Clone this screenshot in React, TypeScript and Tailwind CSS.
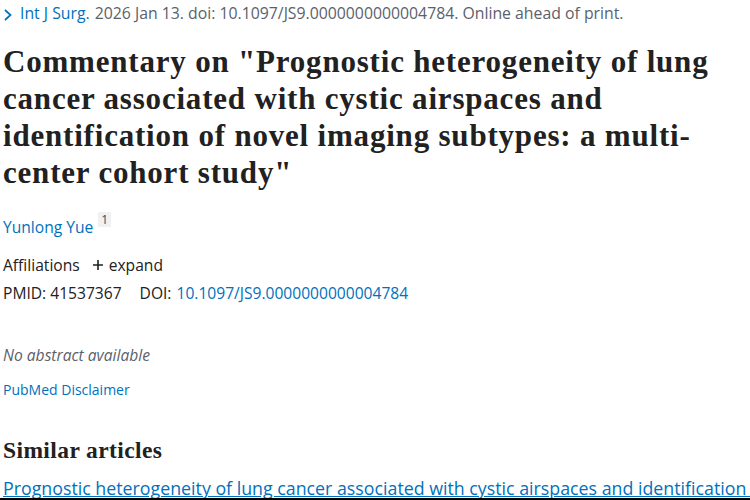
export default function App() {
  const sans = "font-['Open_Sans','Noto_Sans',sans-serif]";

  return (
    <main className={`h-[500px] overflow-hidden bg-white text-[#212121] ${sans} border-b-2 border-black`}>
      <div className="pl-[3px] pr-2">
        <div className="flex items-center h-[26px] mt-[1px] text-[15.8px] text-[#5b616b] whitespace-nowrap">
          <svg width="10" height="14" viewBox="0 0 10 14" className="mr-[7px] mt-[1px]">
            <path d="M2 2 L7.5 7 L2 12" fill="none" stroke="#0071bc" strokeWidth="1.7" />
          </svg>
          <span className="text-[#0071bc]">Int J Surg.</span>
          <span className="ml-[5px]">2026 Jan 13. doi: 10.1097/JS9.0000000000004784. Online ahead of print.</span>
        </div>

        <h1 className="mt-[16px] w-[735px] font-['Liberation_Serif',serif] font-bold text-[31px] leading-[37px] tracking-[0.8px]">
          Commentary on "Prognostic heterogeneity of lung cancer associated with cystic airspaces and identification of novel imaging subtypes: a multi-center cohort study"
        </h1>

        <div className="mt-[25px] flex items-start text-[15.6px] leading-[22px]">
          <span className="text-[#0071bc]">Yunlong Yue</span>
          <span className="ml-[5px] -mt-[4px] px-[3px] bg-[#f1f1f1] text-[12px] leading-[15px] text-[#2d4f6c]">1</span>
        </div>

        <div className="mt-[16px] flex items-center text-[15.6px] leading-[22px]">
          <span>Affiliations</span>
          <span className="ml-[12px] flex items-center">
            <svg width="12" height="12" viewBox="0 0 12 12" className="mr-[5px]">
              <path d="M6 1 V11 M1 6 H11" stroke="#212121" strokeWidth="1.6" />
            </svg>
            expand
          </span>
        </div>

        <div className="mt-[6px] flex text-[15.6px] leading-[22px]">
          <span>PMID: 41537367</span>
          <span className="ml-[18px]">DOI:</span>
          <span className="ml-[5px] text-[#0071bc]">10.1097/JS9.0000000000004784</span>
        </div>

        <p className="mt-[40px] text-[15.6px] leading-[22px] italic text-[#5b616b]">No abstract available</p>

        <p className="mt-[14px] text-[14px] leading-[20px] text-[#0071bc]">PubMed Disclaimer</p>

        <h2 className="mt-[35px] font-['Liberation_Serif',serif] font-bold text-[23.5px] leading-[30px] tracking-[0.4px]">
          Similar articles
        </h2>

        <p className="mt-[12px] text-[17.8px] leading-[22px] text-[#0071bc] underline whitespace-nowrap">
          Prognostic heterogeneity of lung cancer associated with cystic airspaces and identification of novel imaging subtypes
        </p>
      </div>
    </main>
  );
}
